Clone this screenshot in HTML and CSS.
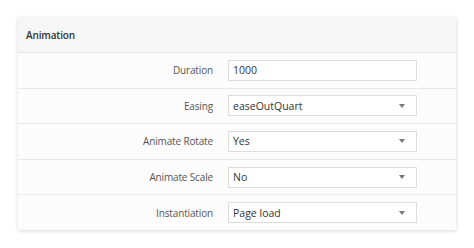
FILE: index.html
```html
<!DOCTYPE html>
<html>
<head>
<meta charset="utf-8">
<link rel="stylesheet" href="styles.css">
</head>
<body>
<div class="card">
  <div class="card-header">Animation</div>
  <div class="row">
    <label class="label">Duration</label>
    <div class="field"><span class="value">1000</span></div>
  </div>
  <div class="row">
    <label class="label">Easing</label>
    <div class="field select"><span class="value">easeOutQuart</span><span class="arrow"></span></div>
  </div>
  <div class="row">
    <label class="label">Animate Rotate</label>
    <div class="field select"><span class="value">Yes</span><span class="arrow"></span></div>
  </div>
  <div class="row">
    <label class="label">Animate Scale</label>
    <div class="field select"><span class="value">No</span><span class="arrow"></span></div>
  </div>
  <div class="row">
    <label class="label">Instantiation</label>
    <div class="field select"><span class="value">Page load</span><span class="arrow"></span></div>
  </div>
</div>
</body>
</html>
```
FILE: styles.css
```css
html, body {
  margin: 0;
  padding: 0;
  background: #ffffff;
}
body {
  padding: 17px 18px;
  font-family: "Open Sans", "Noto Sans", sans-serif;
  font-size: 10px;
  letter-spacing: -0.15px;
  color: #444444;
}
.card {
  width: 438px;
  background: #fcfcfc;
  box-shadow: 0 1px 4px rgba(0, 0, 0, 0.16);
}
.card-header {
  height: 35px;
  display: flex;
  align-items: center;
  padding-left: 8px;
  background: #f6f6f6;
  border-bottom: 1px solid #e6e6e6;
  font-weight: 600;
  color: #333333;
}
.row {
  height: 34.6px;
  display: flex;
  align-items: center;
  gap: 15px;
}
.row + .row {
  border-top: 1px solid #e8e8e8;
}
.label {
  width: 195px;
  text-align: right;
  color: #555555;
}
.field {
  box-sizing: border-box;
  width: 189px;
  height: 21px;
  border: 1px solid #dcdcdc;
  background: #ffffff;
  display: flex;
  align-items: center;
  padding: 0 4px;
  color: #333333;
  font-size: 10.5px;
  letter-spacing: 0;
}
.value {
  flex: 1;
}
.arrow {
  width: 0;
  height: 0;
  border-left: 3.5px solid transparent;
  border-right: 3.5px solid transparent;
  border-top: 4px solid #777777;
  margin-right: 7px;
}
```
